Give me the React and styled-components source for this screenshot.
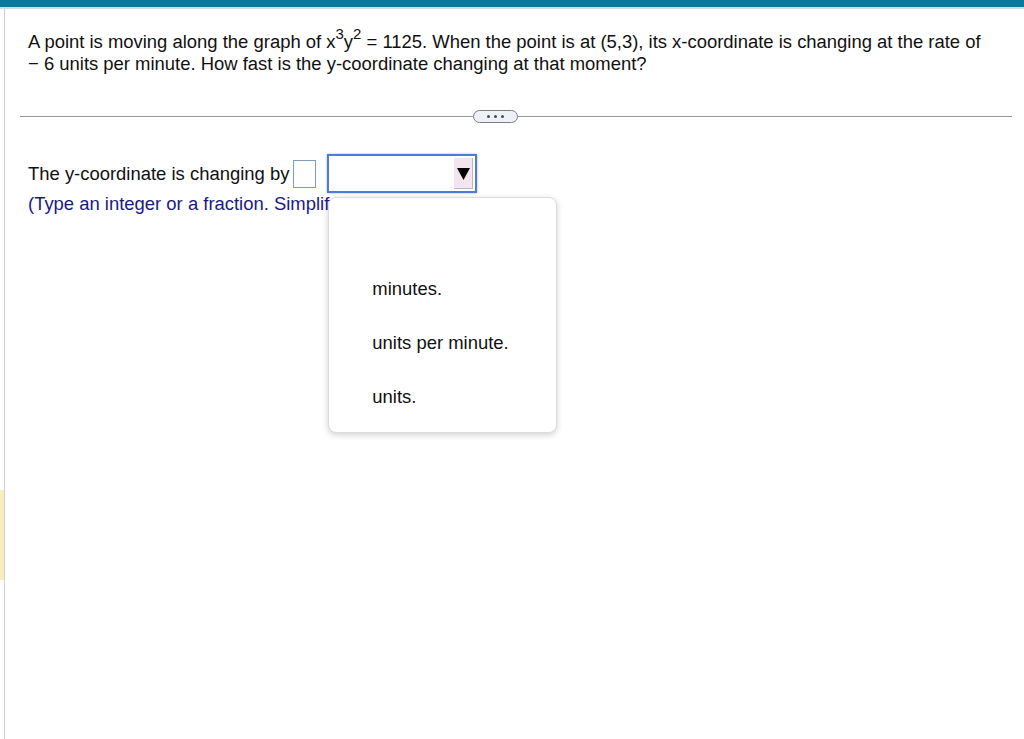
import React from 'react';
import styled, {createGlobalStyle} from 'styled-components';

const GlobalStyle = createGlobalStyle`
    html, body {
        margin: 0;
        padding: 0;
        background: #fff;
    }
    body {
        font-family: "Liberation Sans", Arial, sans-serif;
        color: #111;
    }
`;

const Page = styled.div`
    min-height: 100vh;
    display: flex;
    flex-direction: column;
`;

const TopBar = styled.div`
    height: 7px;
    background: #087b9b;
    border-bottom: 2px solid #cfdde7;
`;

const Body = styled.div`
    flex: 1;
    display: flex;
`;

const Rail = styled.div`
    width: 4px;
    flex-shrink: 0;
`;

const RailMark = styled.div`
    margin-top: 481px;
    height: 90px;
    background: #f9ecbd;
`;

const Content = styled.div`
    flex: 1;
    border-left: 1px solid #cfcfcf;
    padding-top: 22px;
`;

const Question = styled.p`
    margin: 0 0 0 23px;
    font-size: 18.45px;
    line-height: 22px;
`;

const Sup = styled.sup`
    font-size: 15px;
    line-height: 0;
    vertical-align: 0;
    position: relative;
    top: -9px;
`;

const Divider = styled.div`
    display: flex;
    align-items: center;
    margin: 35px 12px 0 15px;

    &::before, &::after {
        content: '';
        flex: 1;
        height: 1px;
        background: #9a9a9a;
    }
    &::before {
        flex: 0 0 453px;
    }
`;

const MoreButton = styled.button`
    width: 45px;
    height: 13px;
    padding: 0;
    border: 1px solid #7c7c84;
    border-radius: 7px;
    background: #eef1f8;
    display: flex;
    align-items: center;
    justify-content: center;
    gap: 4px;

    span {
        width: 3px;
        height: 3px;
        border-radius: 50%;
        background: #4a4a50;
    }
`;

const AnswerRow = styled.div`
    display: flex;
    align-items: center;
    margin: 31px 0 0 23px;
    font-size: 18.45px;
`;

const AnswerBox = styled.div`
    width: 21px;
    height: 26px;
    margin-left: 4px;
    border: 1px solid #7f9cc6;
    background: #fff;
`;

const SelectWrap = styled.div`
    position: relative;
    margin-left: 11px;
`;

const Select = styled.div`
    width: 144px;
    height: 35px;
    border: 2px solid #4f7bd2;
    box-shadow: 0 0 2px rgba(79, 123, 210, 0.6);
    display: flex;
    align-items: center;
    justify-content: flex-end;
    padding-right: 2px;
    box-sizing: content-box;
`;

const ArrowButton = styled.div`
    width: 18px;
    height: 30px;
    background: #f3e5f0;
    border-right: 1px solid #b8b8b8;
    border-bottom: 1px solid #b8b8b8;
    display: flex;
    align-items: center;
    justify-content: center;
`;

const Menu = styled.ul`
    position: absolute;
    top: 43px;
    left: 1px;
    width: 229px;
    margin: 0;
    padding: 10px 0 8px;
    list-style: none;
    background: #fff;
    border: 1px solid #dcdcdc;
    border-radius: 8px;
    box-shadow: 0 2px 6px rgba(0, 0, 0, 0.18);
    box-sizing: border-box;
    z-index: 2;
`;

const MenuItem = styled.li`
    height: 54px;
    display: flex;
    align-items: center;
    padding-left: 43px;
    font-size: 18.45px;
    color: #111;
`;

const Hint = styled.p`
    margin: 1px 0 0 23px;
    font-size: 18.45px;
    line-height: 20px;
    color: #1a1a86;
`;

const App = () => {
    return (
        <Page>
            <GlobalStyle />
            <TopBar />
            <Body>
                <Rail>
                    <RailMark />
                </Rail>
                <Content>
                    <Question>
                        A point is moving along the graph of x<Sup>3</Sup>y<Sup>2</Sup> = 1125. When the point is at (5,3), its x-coordinate is changing at the rate of
                        <br />
                        {'\u2212'} 6 units per minute. How fast is the y-coordinate changing at that moment?
                    </Question>
                    <Divider>
                        <MoreButton>
                            <span />
                            <span />
                            <span />
                        </MoreButton>
                    </Divider>
                    <AnswerRow>
                        The y-coordinate is changing by
                        <AnswerBox />
                        <SelectWrap>
                            <Select>
                                <ArrowButton>
                                    <svg width="13" height="13" viewBox="0 0 12 12">
                                        <path d="M0 1 L12 1 L6 12 Z" fill="#000" />
                                    </svg>
                                </ArrowButton>
                            </Select>
                            <Menu>
                                <MenuItem />
                                <MenuItem>minutes.</MenuItem>
                                <MenuItem>units per minute.</MenuItem>
                                <MenuItem>units.</MenuItem>
                            </Menu>
                        </SelectWrap>
                    </AnswerRow>
                    <Hint>(Type an integer or a fraction. Simplify your answer.)</Hint>
                </Content>
            </Body>
        </Page>
    );
};

export default App;
